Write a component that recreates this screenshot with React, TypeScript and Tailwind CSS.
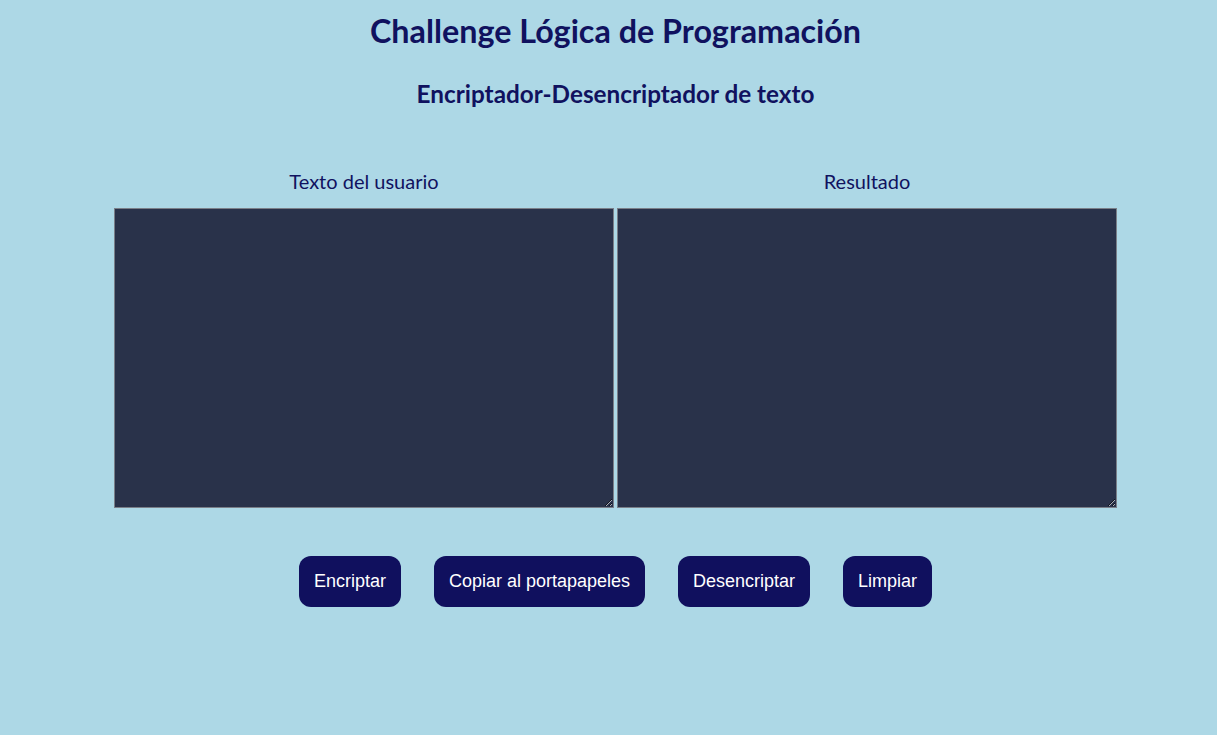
import React, { useState } from 'react';

const encrypt = (s: string) =>
  s.replace(/e/g, 'enter').replace(/i/g, 'imes').replace(/a/g, 'ai').replace(/o/g, 'ober').replace(/u/g, 'ufat');

const decrypt = (s: string) =>
  s.replace(/enter/g, 'e').replace(/imes/g, 'i').replace(/ai/g, 'a').replace(/ober/g, 'o').replace(/ufat/g, 'u');

export default function App() {
  const [input, setInput] = useState('');
  const [output, setOutput] = useState('');

  const buttons = [
    { label: 'Encriptar', onClick: () => setOutput(encrypt(input)) },
    { label: 'Copiar al portapapeles', onClick: () => navigator.clipboard?.writeText(output) },
    { label: 'Desencriptar', onClick: () => setOutput(decrypt(input)) },
    { label: 'Limpiar', onClick: () => { setInput(''); setOutput(''); } },
  ];

  return (
    <div className="min-h-[735px] w-full bg-[#add8e6] pl-[14px] text-[#10125f] font-['Lato','Liberation_Sans',sans-serif]">
      <h1 className="pt-[12px] text-center text-[32.3px] font-bold leading-[38px]">
        Challenge Lógica de Programación
      </h1>
      <h2 className="mt-[29px] text-center text-[24.3px] font-bold leading-[29px]">
        Encriptador-Desencriptador de texto
      </h2>

      <div className="mt-[61px] flex justify-center gap-[3px]">
        <div className="flex w-[500px] flex-col items-center">
          <label className="text-[20px] leading-[24px]">Texto del usuario</label>
          <textarea
            value={input}
            onChange={(e) => setInput(e.target.value)}
            className="mt-[15px] h-[300px] w-[500px] border border-[#7a7f88] bg-[#29324a] p-1 text-white outline-none"
          />
        </div>
        <div className="flex w-[500px] flex-col items-center">
          <label className="text-[20px] leading-[24px]">Resultado</label>
          <textarea
            value={output}
            readOnly
            className="mt-[15px] h-[300px] w-[500px] border border-[#7a7f88] bg-[#29324a] p-1 text-white outline-none"
          />
        </div>
      </div>

      <div className="mt-[48px] flex justify-center gap-[33px]">
        {buttons.map((b) => (
          <button
            key={b.label}
            onClick={b.onClick}
            className="h-[51px] rounded-[12px] bg-[#10105e] px-[15px] font-['Liberation_Sans',Arial,sans-serif] text-[18px] text-white"
          >
            {b.label}
          </button>
        ))}
      </div>
    </div>
  );
}
